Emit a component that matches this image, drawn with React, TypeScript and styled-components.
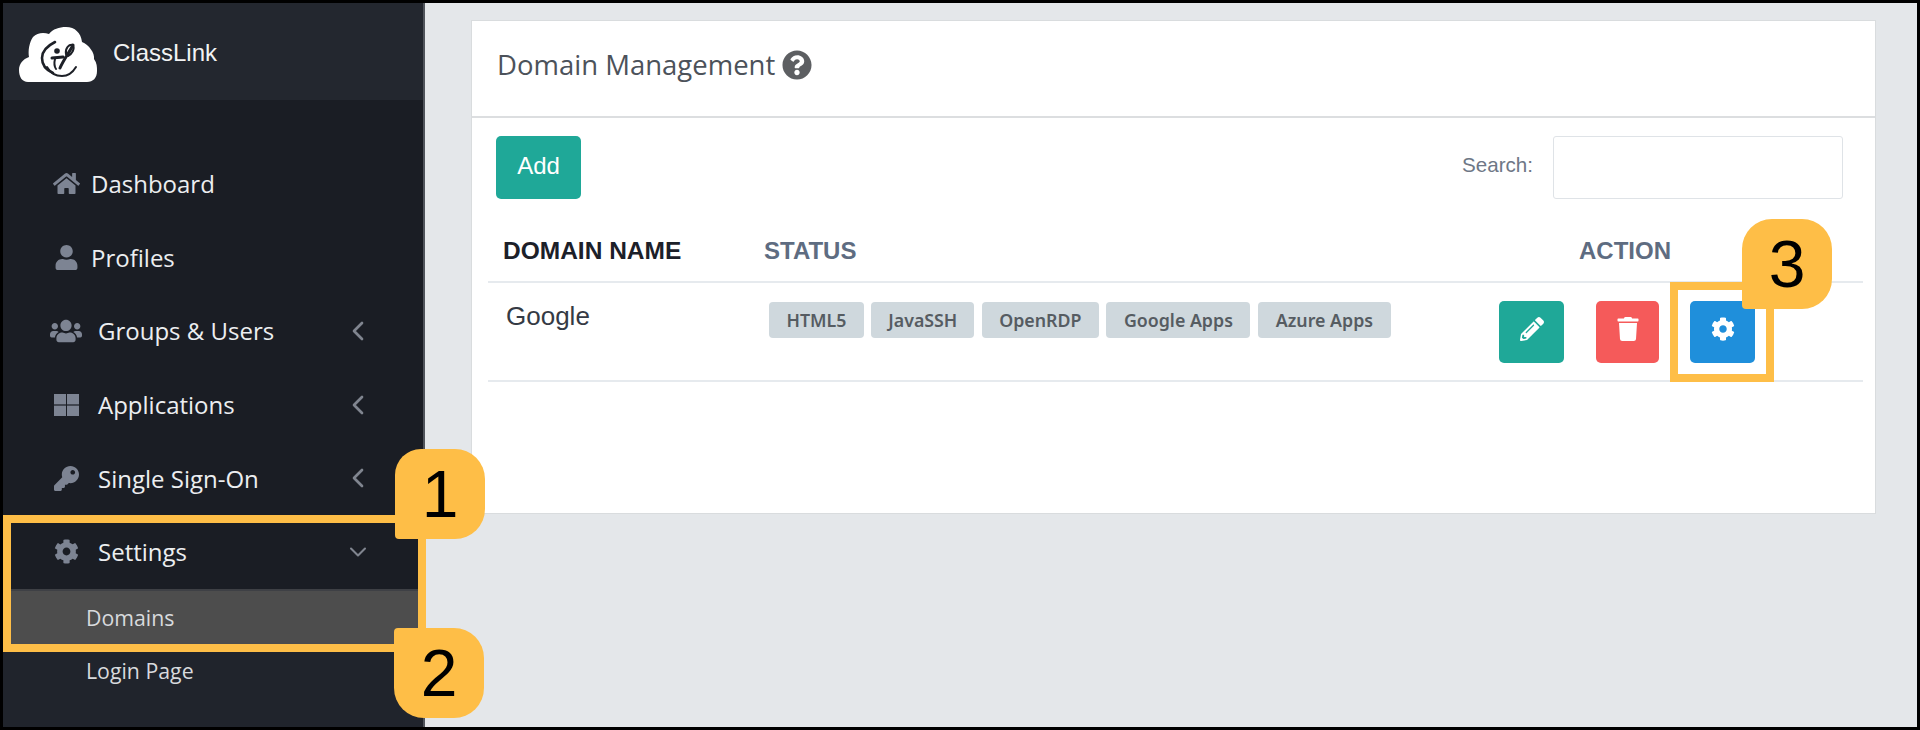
import React from "react";
import styled, { createGlobalStyle } from "styled-components";
import {
  FaHome,
  FaUser,
  FaUsers,
  FaKey,
  FaCog,
  FaPencilAlt,
  FaTrash,
  FaQuestionCircle,
} from "react-icons/fa";
import { ChevronLeft, ChevronDown } from "lucide-react";

const Global = createGlobalStyle`
  html, body { margin: 0; padding: 0; background: #000; }
  * { box-sizing: border-box; }
`;

const Frame = styled.div`
  position: relative;
  width: 1920px;
  height: 730px;
  padding: 3px;
  background: #000;
  overflow: hidden;
`;
const Screen = styled.div`
  display: flex;
  width: 100%;
  height: 100%;
  background: #e4e7ea;
`;
const Sidebar = styled.aside`
  display: flex;
  flex-direction: column;
  width: 422px;
  flex: none;
  background: #1a1d24;
  border-right: 2px solid #50545b;
`;
const Brand = styled.div`
  display: flex;
  align-items: center;
  height: 97px;
  padding: 0 0 0 16px;
  gap: 16px;
  background: #23272f;
  font: 400 24px "Liberation Sans", Arial, sans-serif;
  color: #f2f3f4;
`;
const LogoBox = styled.span`
  display: flex;
  margin-top: 7px;
`;
const BrandName = styled.span`
  margin-top: 3px;
`;
const Nav = styled.nav`
  display: flex;
  flex-direction: column;
  flex: 1;
  padding-top: 47px;
`;
const NavRow = styled.div`
  display: flex;
  align-items: center;
  height: 73.6px;
  padding-left: 48px;
  color: #eceef0;
  font: 400 24px "Open Sans", sans-serif;
`;
const NavIcon = styled.span<{ $size: number; $gap: number }>`
  display: flex;
  align-items: center;
  justify-content: center;
  width: 30px;
  flex: none;
  margin-right: ${(p) => p.$gap}px;
  color: #7d8493;
  font-size: ${(p) => p.$size}px;
  svg { flex: none; }
`;
const NavLabel = styled.span`
  flex: 1;
`;
const Chevron = styled.span`
  display: flex;
  justify-content: center;
  width: 30px;
  margin-right: 50px;
  color: #80858f;
  svg { flex: none; }
`;
const SubMenu = styled.div`
  flex: 1;
  background: #20242c;
`;
const SubItem = styled.div<{ $active?: boolean }>`
  display: flex;
  align-items: center;
  height: ${(p) => (p.$active ? 55 : 53)}px;
  padding-left: 83px;
  background: ${(p) => (p.$active ? "#4d4d4d" : "transparent")};
  border-top: ${(p) => (p.$active ? "2px solid #3e4045" : "0")};
  color: #d8dadd;
  font: 400 21.3px "Open Sans", sans-serif;
`;
const Main = styled.main`
  flex: 1;
  padding: 17px 41px 0 46px;
`;
const Card = styled.section`
  height: 494px;
  background: #fff;
  border: 1px solid #d9dcde;
`;
const CardHead = styled.header`
  display: flex;
  align-items: center;
  gap: 7px;
  height: 97px;
  padding: 0 0 8px 25px;
  border-bottom: 2px solid #dcdee0;
  color: #4c525a;
  font: 400 27.5px "Open Sans", sans-serif;
`;
const HelpIcon = styled.span`
  display: flex;
  color: #5d5f62;
  font-size: 30px;
`;
const CardBody = styled.div`
  padding: 18px 12px 0 16px;
`;
const Toolbar = styled.div`
  display: flex;
  align-items: flex-start;
  justify-content: space-between;
  padding: 0 20px 0 8px;
`;
const AddButton = styled.button`
  width: 85px;
  height: 63px;
  padding: 0 0 4px;
  border: 0;
  border-radius: 5px;
  background: #1fa898;
  color: #fff;
  font: 400 24px "Liberation Sans", Arial, sans-serif;
`;
const SearchBox = styled.label`
  display: flex;
  gap: 20px;
  color: #6e7786;
  font: 400 20.6px/58px "Liberation Sans", Arial, sans-serif;
`;
const SearchInput = styled.input`
  width: 290px;
  height: 63px;
  border: 1px solid #dfe3e7;
  border-radius: 3px;
  background: #fff;
`;
const Table = styled.table`
  width: 100%;
  border-collapse: collapse;
  table-layout: fixed;
`;
const Th = styled.th<{ $dark?: boolean }>`
  height: 83px;
  padding: 21px 0 0;
  border-bottom: 2px solid #e6eaee;
  text-align: left;
  font: 700 ${(p) => (p.$dark ? 24.5 : 24)}px "Liberation Sans", Arial, sans-serif;
  color: ${(p) => (p.$dark ? "#1c2029" : "#5e6c81")};
`;
const Td = styled.td`
  height: 99px;
  padding: 0;
  vertical-align: top;
  border-bottom: 2px solid #e6eaee;
`;
const DomainName = styled.div`
  padding: 18px 0 0 18px;
  color: #353a44;
  font: 400 26px "Liberation Sans", Arial, sans-serif;
`;
const HeadName = styled.span<{ $indent: number }>`
  padding-left: ${(p) => p.$indent}px;
`;
const TagList = styled.div`
  display: flex;
  gap: 7.3px;
  padding: 19px 0 0 5px;
`;
const Tag = styled.span<{ $w: number }>`
  display: flex;
  align-items: center;
  justify-content: center;
  width: ${(p) => p.$w}px;
  height: 36px;
  border-radius: 4px;
  background: #cfd8dd;
  color: #565c62;
  font: 600 17.8px "Noto Sans", sans-serif;
`;
const Actions = styled.div`
  display: flex;
  padding: 18px 0 0 5px;
`;
const ActionButton = styled.button<{ $bg: string; $w: number; $gap: number }>`
  display: flex;
  align-items: center;
  justify-content: center;
  width: ${(p) => p.$w}px;
  height: 62px;
  margin-right: ${(p) => p.$gap}px;
  padding: 0 0 6px;
  border: 0;
  border-radius: 5px;
  background: ${(p) => p.$bg};
  color: #fff;
  font-size: 24px;
`;
const Marker = styled.div<{ $x: number; $y: number; $w: number; $h: number }>`
  position: absolute;
  left: ${(p) => p.$x}px;
  top: ${(p) => p.$y}px;
  width: ${(p) => p.$w}px;
  height: ${(p) => p.$h}px;
  border: 8px solid #febe47;
`;
const Badge = styled.div<{ $x: number; $y: number; $corner: string }>`
  position: absolute;
  left: ${(p) => p.$x}px;
  top: ${(p) => p.$y}px;
  display: flex;
  align-items: center;
  justify-content: center;
  width: 90px;
  height: 90px;
  border-radius: ${(p) => p.$corner};
  background: #febe47;
  color: #000;
  font: 400 66px "Liberation Sans", Arial, sans-serif;
`;

const Logo = () => (
  <svg width="78" height="56" viewBox="0 0 78 56" aria-hidden="true">
    <path
      fill="#fff"
      d="M9 55C3 55 0 50 0 43C0 37 4 32 10 30C9 24 10 16 14 10C18 6 24 5 30 7C34 2 40 0 47 0C56 0 62 6 63 15C70 18 76 26 75 32C78 36 78 40 78 44C78 51 74 55 68 55Z"
    />
    <g fill="none" stroke="#1d2027" strokeLinecap="round">
      <path strokeWidth="2.6" d="M36 15C28 19 23 25 23 31C23 38 27 43 34 46" />
      <path strokeWidth="2" d="M28 40C32 47 38 49 43 49C49 49 54 45 57 40" />
      <path strokeWidth="3" d="M54 18C50 26 45 32 41 41" />
      <path strokeWidth="2" d="M47 27C46 21 50 17 54 18C56 22 53 27 49 29" />
      <path strokeWidth="3" d="M33 31L44 30" />
      <path strokeWidth="2" d="M36 32C35 36 35 39 37 42" />
      <circle cx="38" cy="24" r="2.8" fill="#1d2027" stroke="none" />
    </g>
  </svg>
);

const GridIcon = () => (
  <svg width="25" height="22" viewBox="0 0 25 22" fill="currentColor" aria-hidden="true">
    <rect x="0" y="0" width="12" height="10.4" />
    <rect x="13" y="0" width="12" height="10.4" />
    <rect x="0" y="11.6" width="12" height="10.4" />
    <rect x="13" y="11.6" width="12" height="10.4" />
  </svg>
);

const items = [
  { label: "Dashboard", icon: <FaHome />, size: 27, gap: 10 },
  { label: "Profiles", icon: <FaUser />, size: 25, gap: 10 },
  { label: "Groups & Users", icon: <FaUsers />, size: 32, gap: 17, more: "left" },
  { label: "Applications", icon: <GridIcon />, size: 25, gap: 17, more: "left" },
  { label: "Single Sign-On", icon: <FaKey />, size: 25, gap: 17, more: "left" },
  { label: "Settings", icon: <FaCog />, size: 25, gap: 17, more: "down" },
];
const tags = [
  { name: "HTML5", w: 95 },
  { name: "JavaSSH", w: 103 },
  { name: "OpenRDP", w: 117.5 },
  { name: "Google Apps", w: 144 },
  { name: "Azure Apps", w: 133.5 },
];

export default function App() {
  return (
    <Frame>
      <Global />
      <Screen>
        <Sidebar>
          <Brand>
            <LogoBox>
              <Logo />
            </LogoBox>
            <BrandName>ClassLink</BrandName>
          </Brand>
          <Nav>
            {items.map((it) => (
              <NavRow key={it.label}>
                <NavIcon $size={it.size} $gap={it.gap}>
                  {it.icon}
                </NavIcon>
                <NavLabel>{it.label}</NavLabel>
                {it.more && (
                  <Chevron>
                    {it.more === "left" ? (
                      <ChevronLeft size={32} strokeWidth={2} />
                    ) : (
                      <ChevronDown size={28} strokeWidth={1.8} />
                    )}
                  </Chevron>
                )}
              </NavRow>
            ))}
            <SubMenu>
              <SubItem $active>Domains</SubItem>
              <SubItem>Login Page</SubItem>
            </SubMenu>
          </Nav>
        </Sidebar>
        <Main>
          <Card>
            <CardHead>
              Domain Management
              <HelpIcon>
                <FaQuestionCircle />
              </HelpIcon>
            </CardHead>
            <CardBody>
              <Toolbar>
                <AddButton>Add</AddButton>
                <SearchBox>
                  Search:
                  <SearchInput />
                </SearchBox>
              </Toolbar>
              <Table>
                <colgroup>
                  <col width="276" />
                  <col width="730" />
                  <col />
                </colgroup>
                <thead>
                  <tr>
                    <Th $dark>
                      <HeadName $indent={15}>DOMAIN NAME</HeadName>
                    </Th>
                    <Th>STATUS</Th>
                    <Th>
                      <HeadName $indent={85}>ACTION</HeadName>
                    </Th>
                  </tr>
                </thead>
                <tbody>
                  <tr>
                    <Td>
                      <DomainName>Google</DomainName>
                    </Td>
                    <Td>
                      <TagList>
                        {tags.map((t) => (
                          <Tag key={t.name} $w={t.w}>
                            {t.name}
                          </Tag>
                        ))}
                      </TagList>
                    </Td>
                    <Td>
                      <Actions>
                        <ActionButton $bg="#1fa898" $w={65} $gap={32}>
                          <FaPencilAlt />
                        </ActionButton>
                        <ActionButton $bg="#f55a5a" $w={63} $gap={31}>
                          <FaTrash />
                        </ActionButton>
                        <ActionButton $bg="#1f8fdb" $w={65} $gap={0}>
                          <FaCog />
                        </ActionButton>
                      </Actions>
                    </Td>
                  </tr>
                </tbody>
              </Table>
            </CardBody>
          </Card>
        </Main>
      </Screen>
      <Marker $x={3} $y={515} $w={423} $h={137} />
      <Marker $x={1670} $y={282} $w={104} $h={100} />
      <Badge $x={395} $y={449} $corner="26px 30px 30px 4px">1</Badge>
      <Badge $x={394} $y={628} $corner="4px 30px 30px 30px">2</Badge>
      <Badge $x={1742} $y={219} $corner="30px 30px 30px 4px">3</Badge>
    </Frame>
  );
}
